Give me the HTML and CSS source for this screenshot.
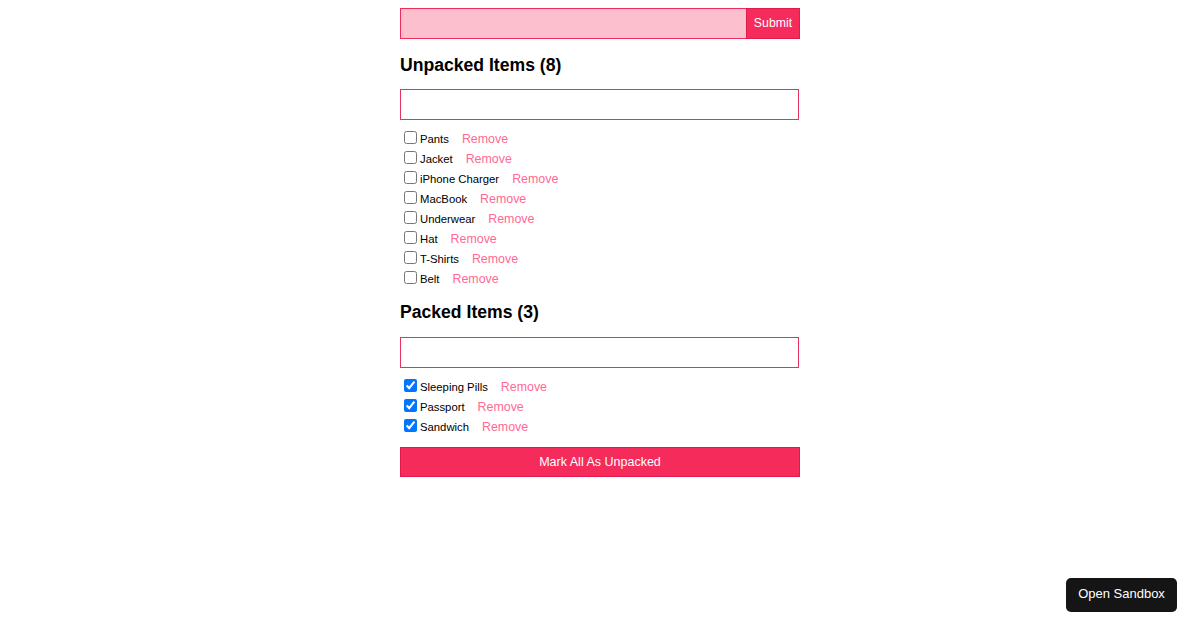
FILE: index.html
```html
<!DOCTYPE html>
<html>
<head>
<meta charset="utf-8">
<link rel="stylesheet" href="styles.css">
</head>
<body>
<div class="app">
  <form class="add-form">
    <input class="add-input" type="text">
    <button class="submit" type="button">Submit</button>
  </form>

  <h2 class="heading">Unpacked Items (8)</h2>
  <input class="filter" type="text">
  <ul class="items">
    <li class="item"><input type="checkbox"><span class="label">Pants</span><button class="remove">Remove</button></li>
    <li class="item"><input type="checkbox"><span class="label">Jacket</span><button class="remove">Remove</button></li>
    <li class="item"><input type="checkbox"><span class="label">iPhone Charger</span><button class="remove">Remove</button></li>
    <li class="item"><input type="checkbox"><span class="label">MacBook</span><button class="remove">Remove</button></li>
    <li class="item"><input type="checkbox"><span class="label">Underwear</span><button class="remove">Remove</button></li>
    <li class="item"><input type="checkbox"><span class="label">Hat</span><button class="remove">Remove</button></li>
    <li class="item"><input type="checkbox"><span class="label">T-Shirts</span><button class="remove">Remove</button></li>
    <li class="item"><input type="checkbox"><span class="label">Belt</span><button class="remove">Remove</button></li>
  </ul>

  <h2 class="heading heading-packed">Packed Items (3)</h2>
  <input class="filter" type="text">
  <ul class="items items-packed">
    <li class="item"><input type="checkbox" checked><span class="label">Sleeping Pills</span><button class="remove">Remove</button></li>
    <li class="item"><input type="checkbox" checked><span class="label">Passport</span><button class="remove">Remove</button></li>
    <li class="item"><input type="checkbox" checked><span class="label">Sandwich</span><button class="remove">Remove</button></li>
  </ul>

  <button class="mark-all" type="button">Mark All As Unpacked</button>
</div>

<button class="open-sandbox" type="button">Open Sandbox</button>
</body>
</html>
```

FILE: styles.css
```css
html, body {
  margin: 0;
  padding: 0;
  background: #ffffff;
}

body {
  font-family: "Liberation Sans", Arial, sans-serif;
  color: #000;
  padding-top: 8px;
}

.app {
  width: 400px;
  margin: 0 auto;
}

.add-form {
  display: flex;
  height: 31px;
  margin: 0;
}

.add-input {
  flex: 1;
  box-sizing: border-box;
  height: 31px;
  margin: 0;
  border: 1px solid #ee2c5a;
  border-right: none;
  background: #fbbfce;
  outline: none;
}

.submit {
  box-sizing: border-box;
  width: 54px;
  height: 31px;
  margin: 0;
  padding: 0 0 2px;
  border: 1px solid #e01a4a;
  background: #f42b5b;
  color: #fff;
  font-family: "Liberation Sans", Arial, sans-serif;
  font-size: 12.3px;
}

.heading {
  margin: 15px 0 13px;
  font-size: 17.6px;
  line-height: 22px;
  font-weight: bold;
}

.heading-packed {
  margin: 14px 0 14px;
}

.filter {
  display: block;
  box-sizing: border-box;
  width: 399px;
  height: 31px;
  margin: 0;
  border: 1px solid #e8325e;
  background: #fff;
  outline: none;
}

.items {
  list-style: none;
  margin: 7px 0 0;
  padding: 0;
}

.items-packed {
  margin: 7px 0 0;
}

.item {
  display: flex;
  align-items: center;
  height: 20px;
}

.item input[type="checkbox"] {
  width: 13px;
  height: 13px;
  margin: 3px 3px 3px 4px;
  flex: none;
}

.label {
  font-size: 11.3px;
  color: #000;
  padding-top: 4px;
}

.remove {
  border: none;
  background: none;
  padding: 4px 0 0 13px;
  margin: 0;
  color: #ff6992;
  font-family: "Liberation Sans", Arial, sans-serif;
  font-size: 12.4px;
  cursor: pointer;
}

.mark-all {
  display: block;
  box-sizing: border-box;
  width: 400px;
  height: 30px;
  margin: 12px 0 0;
  padding: 0;
  border: 1px solid #e2194b;
  background: #f42b5b;
  color: #fff;
  font-family: "Liberation Sans", Arial, sans-serif;
  font-size: 12.5px;
}

.open-sandbox {
  position: fixed;
  right: 23px;
  bottom: 18px;
  box-sizing: border-box;
  width: 111px;
  height: 34px;
  padding: 0 0 3px;
  border: none;
  border-radius: 5px;
  background: #151515;
  color: #fff;
  font-family: "Liberation Sans", Arial, sans-serif;
  font-size: 13px;
}
```
